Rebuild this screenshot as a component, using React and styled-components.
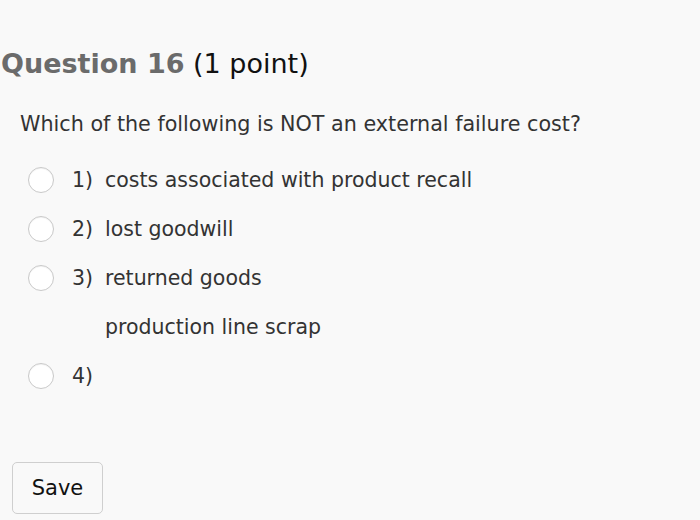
import React from 'react';
import styled, { createGlobalStyle } from 'styled-components';

const GlobalStyle = createGlobalStyle`
    html, body {
        margin: 0;
        padding: 0;
        background: #f9f9f9;
    }
    body {
        font-family: 'DejaVu Sans', Verdana, sans-serif;
        color: #333;
    }
`;

const options = [
    { num: '1)', text: 'costs associated with product recall' },
    { num: '2)', text: 'lost goodwill' },
    { num: '3)', text: 'returned goods' },
    { num: null, text: 'production line scrap' },
    { num: '4)', text: '' },
];

const App = () => {
    return (
        <Page>
            <GlobalStyle />
            <Title>
                <TitleStrong>Question 16</TitleStrong> (1 point)
            </Title>
            <QuestionText>Which of the following is NOT an external failure cost?</QuestionText>
            <OptionList>
                {options.map((o, i) =>
                    <OptionRow key={i}>
                        {o.num ? <Radio /> : <span />}
                        <OptionNum>{o.num}</OptionNum>
                        <OptionText>{o.text}</OptionText>
                    </OptionRow>
                )}
            </OptionList>
            <SaveButton>Save</SaveButton>
        </Page>
    );
};
export default App;

const Page = styled.div`
    width: 700px;
    height: 520px;
    box-sizing: border-box;
    padding-top: 44px;
    display: flex;
    flex-direction: column;
    align-items: flex-start;
`;
const Title = styled.h2`
    margin: 0 0 0 1px;
    font-size: 27px;
    font-weight: normal;
    line-height: 40px;
    color: #111;
`;
const TitleStrong = styled.span`
    font-weight: bold;
    color: #6b6b6b;
`;
const QuestionText = styled.p`
    margin: 25px 0 0 20px;
    font-size: 20.7px;
    line-height: 30px;
    color: #333;
`;
const OptionList = styled.div`
    margin: 16px 0 0 28px;
    display: flex;
    flex-direction: column;
`;
const OptionRow = styled.div`
    display: grid;
    grid-template-columns: 25px 33px auto;
    column-gap: 19px;
    align-items: center;
    height: 49px;
`;
const Radio = styled.span`
    width: 24px;
    height: 24px;
    border-radius: 50%;
    border: 1px solid #c9c9c9;
    background: #fff;
    box-shadow: inset 0 1px 1px rgba(0, 0, 0, 0.05);
`;
const OptionNum = styled.span`
    font-size: 20.5px;
    color: #333;
`;
const OptionText = styled.span`
    margin-left: -19px;
    font-size: 20.5px;
    color: #333;
`;
const SaveButton = styled.button`
    margin: 62px 0 0 12px;
    width: 91px;
    height: 52px;
    border: 1px solid #cfcfcf;
    border-radius: 5px;
    background: #f9f9f9;
    font-family: 'DejaVu Sans', Verdana, sans-serif;
    font-size: 21px;
    color: #111;
`;
